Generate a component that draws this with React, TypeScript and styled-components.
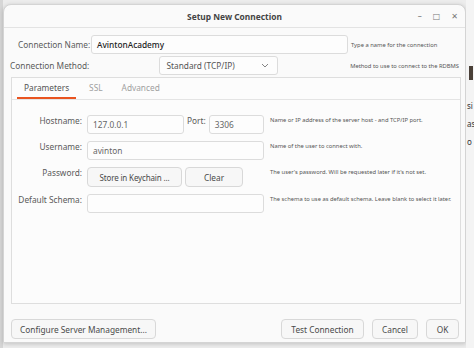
import styled, { createGlobalStyle } from "styled-components"

const Global = createGlobalStyle`
  html, body {
    margin: 0;
    padding: 0;
    width: 474px;
    height: 348px;
    overflow: hidden;
    background: #ececec;
    font-family: "Noto Sans", "DejaVu Sans", sans-serif;
  }
`

const Screen = styled.div`
  display: flex;
  width: 474px;
  height: 348px;
`

const LeftStrip = styled.div`
  width: 3px;
  background: #d6d6d6;
`

const RightStrip = styled.div`
  flex: 1;
  background: #f4f4f4;
  display: flex;
  flex-direction: column;
  padding-top: 66px;
  font-size: 8px;
  color: #333;
  overflow: hidden;
`

const DarkBlock = styled.div`
  width: 4px;
  height: 14px;
  margin-left: 3px;
  background: #4a4038;
  margin-bottom: 20px;
`

const PeekText = styled.div`
  height: 18px;
  margin-left: 1px;
`

const Dialog = styled.div`
  width: 463px;
  height: 339px;
  margin-top: 4px;
  background: #fafafa;
  border: 1px solid #d4d4d4;
  border-radius: 8px 8px 0 0;
  box-sizing: border-box;
  box-shadow: 0 1px 4px rgba(0, 0, 0, 0.18);
  display: flex;
  flex-direction: column;
`

const TitleBar = styled.div`
  height: 22px;
  flex-shrink: 0;
  border-bottom: 1px solid #e3e3e3;
  display: flex;
  align-items: center;
  justify-content: center;
  position: relative;
  font-size: 8.4px;
  font-weight: 700;
  color: #444;
`

const Controls = styled.div`
  position: absolute;
  right: 7px;
  top: 5px;
  display: flex;
  gap: 11px;
  color: #777;
  font-weight: 400;
  font-size: 8px;
`

const Body = styled.div`
  flex: 1;
  display: flex;
  flex-direction: column;
  padding: 7px 6px 0 6px;
`

const TopRow = styled.div<{ $pad: number }>`
  display: flex;
  align-items: center;
  height: 19px;
  margin-bottom: 2px;
  padding-left: ${(p) => p.$pad}px;
`

const TopLabel = styled.div<{ $w: number }>`
  width: ${(p) => p.$w}px;
  font-size: 8.3px;
  color: #5a5a5a;
  white-space: nowrap;
`

const Input = styled.div<{ $w: number; $dark?: boolean }>`
  width: ${(p) => p.$w}px;
  height: 19px;
  box-sizing: border-box;
  border: 1px solid #dcdcdc;
  border-radius: 3px;
  background: #fdfdfd;
  font-size: 8.3px;
  color: ${(p) => (p.$dark ? "#222" : "#666")};
  font-weight: ${(p) => (p.$dark ? 500 : 400)};
  display: flex;
  align-items: center;
  padding-left: 5px;
  white-space: nowrap;
`

const Select = styled(Input)`
  justify-content: space-between;
  padding: 0 8px 0 7px;
  color: #555;
`

const Help = styled.div<{ $ml: number }>`
  margin-left: ${(p) => p.$ml}px;
  font-size: 5.8px;
  color: #555;
  white-space: nowrap;
`

const Panel = styled.div`
  margin: 0 0 0 1px;
  width: 450px;
  height: 227px;
  box-sizing: border-box;
  border: 1px solid #dedede;
  background: #fcfcfc;
  display: flex;
  flex-direction: column;
`

const TabBar = styled.div`
  height: 21px;
  display: flex;
  align-items: stretch;
  padding-left: 5px;
  border-bottom: 1px solid #e4e4e4;
`

const Tab = styled.div<{ $active?: boolean; $mr: number }>`
  padding: 0 7px;
  display: flex;
  align-items: center;
  font-size: 8.3px;
  color: ${(p) => (p.$active ? "#555" : "#a0a0a0")};
  border-bottom: 2px solid ${(p) => (p.$active ? "#e95420" : "transparent")};
  margin-right: ${(p) => p.$mr}px;
`

const Fields = styled.div`
  display: grid;
  grid-template-columns: 70px 177px auto;
  column-gap: 5px;
  row-gap: 7px;
  padding-top: 15px;
  align-items: center;
`

const FieldLabel = styled.div`
  font-size: 8.3px;
  color: #5a5a5a;
  text-align: right;
  white-space: nowrap;
  align-self: start;
`

const Inline = styled.div`
  display: flex;
  align-items: flex-start;
  gap: 3px;
`

const SmallLabel = styled.div`
  font-size: 8.3px;
  color: #5a5a5a;
`

const FieldHelp = styled.div`
  font-size: 5.8px;
  color: #555;
  white-space: nowrap;
  align-self: start;
  padding-top: 1px;
  margin-left: 1px;
`

const Button = styled.div<{ $w: number; $tight?: boolean }>`
  width: ${(p) => p.$w}px;
  height: 20px;
  box-sizing: border-box;
  border: 1px solid #d8d8d8;
  border-radius: 4px;
  background: #f7f7f7;
  font-size: ${(p) => (p.$tight ? 8 : 8.3)}px;
  letter-spacing: ${(p) => (p.$tight ? -0.15 : 0)}px;
  color: #4a4a4a;
  display: flex;
  align-items: center;
  justify-content: center;
  white-space: nowrap;
`

const Footer = styled.div`
  display: flex;
  align-items: center;
  padding: 15px 0 0 1px;
  gap: 8px;
`

const Spacer = styled.div`
  flex: 1;
`

const Chevron = () => (
  <svg width="8" height="5" viewBox="0 0 8 5">
    <path d="M1 1 L4 4 L7 1" fill="none" stroke="#777" strokeWidth="0.9" />
  </svg>
)

const App = () => {
  return (
    <>
      <Global />
      <Screen>
        <LeftStrip />
        <Dialog>
          <TitleBar>
            Setup New Connection
            <Controls>
              <span>–</span>
              <span>□</span>
              <span>✕</span>
            </Controls>
          </TitleBar>
          <Body>
            <TopRow $pad={8}>
              <TopLabel $w={73}>Connection Name:</TopLabel>
              <Input $w={257} $dark>AvintonAcademy</Input>
              <Help $ml={3}>Type a name for the connection</Help>
            </TopRow>
            <TopRow $pad={0}>
              <TopLabel $w={149}>Connection Method:</TopLabel>
              <Select $w={120}>
                Standard (TCP/IP)
                <Chevron />
              </Select>
              <Help $ml={72}>Method to use to connect to the RDBMS</Help>
            </TopRow>
            <Panel>
              <TabBar>
                <Tab $active $mr={6}>Parameters</Tab>
                <Tab $mr={5}>SSL</Tab>
                <Tab $mr={0}>Advanced</Tab>
              </TabBar>
              <Fields>
                <FieldLabel>Hostname:</FieldLabel>
                <Inline>
                  <Input $w={97}>127.0.0.1</Input>
                  <SmallLabel>Port:</SmallLabel>
                  <Input $w={55}>3306</Input>
                </Inline>
                <FieldHelp>Name or IP address of the server host - and TCP/IP port.</FieldHelp>

                <FieldLabel>Username:</FieldLabel>
                <Input $w={177}>avinton</Input>
                <FieldHelp>Name of the user to connect with.</FieldHelp>

                <FieldLabel>Password:</FieldLabel>
                <Inline>
                  <Button $w={95} $tight>Store in Keychain ...</Button>
                  <Button $w={58}>Clear</Button>
                </Inline>
                <FieldHelp>The user's password. Will be requested later if it's not set.</FieldHelp>

                <FieldLabel>Default Schema:</FieldLabel>
                <Input $w={177}></Input>
                <FieldHelp>The schema to use as default schema. Leave blank to select it later.</FieldHelp>
              </Fields>
            </Panel>
            <Footer>
              <Button $w={145}>Configure Server Management...</Button>
              <Spacer />
              <Button $w={83}>Test Connection</Button>
              <Button $w={46}>Cancel</Button>
              <Button $w={33}>OK</Button>
            </Footer>
          </Body>
        </Dialog>
        <RightStrip>
          <DarkBlock />
          <PeekText>si</PeekText>
          <PeekText>as</PeekText>
          <PeekText>o</PeekText>
        </RightStrip>
      </Screen>
    </>
  )
}

export default App
